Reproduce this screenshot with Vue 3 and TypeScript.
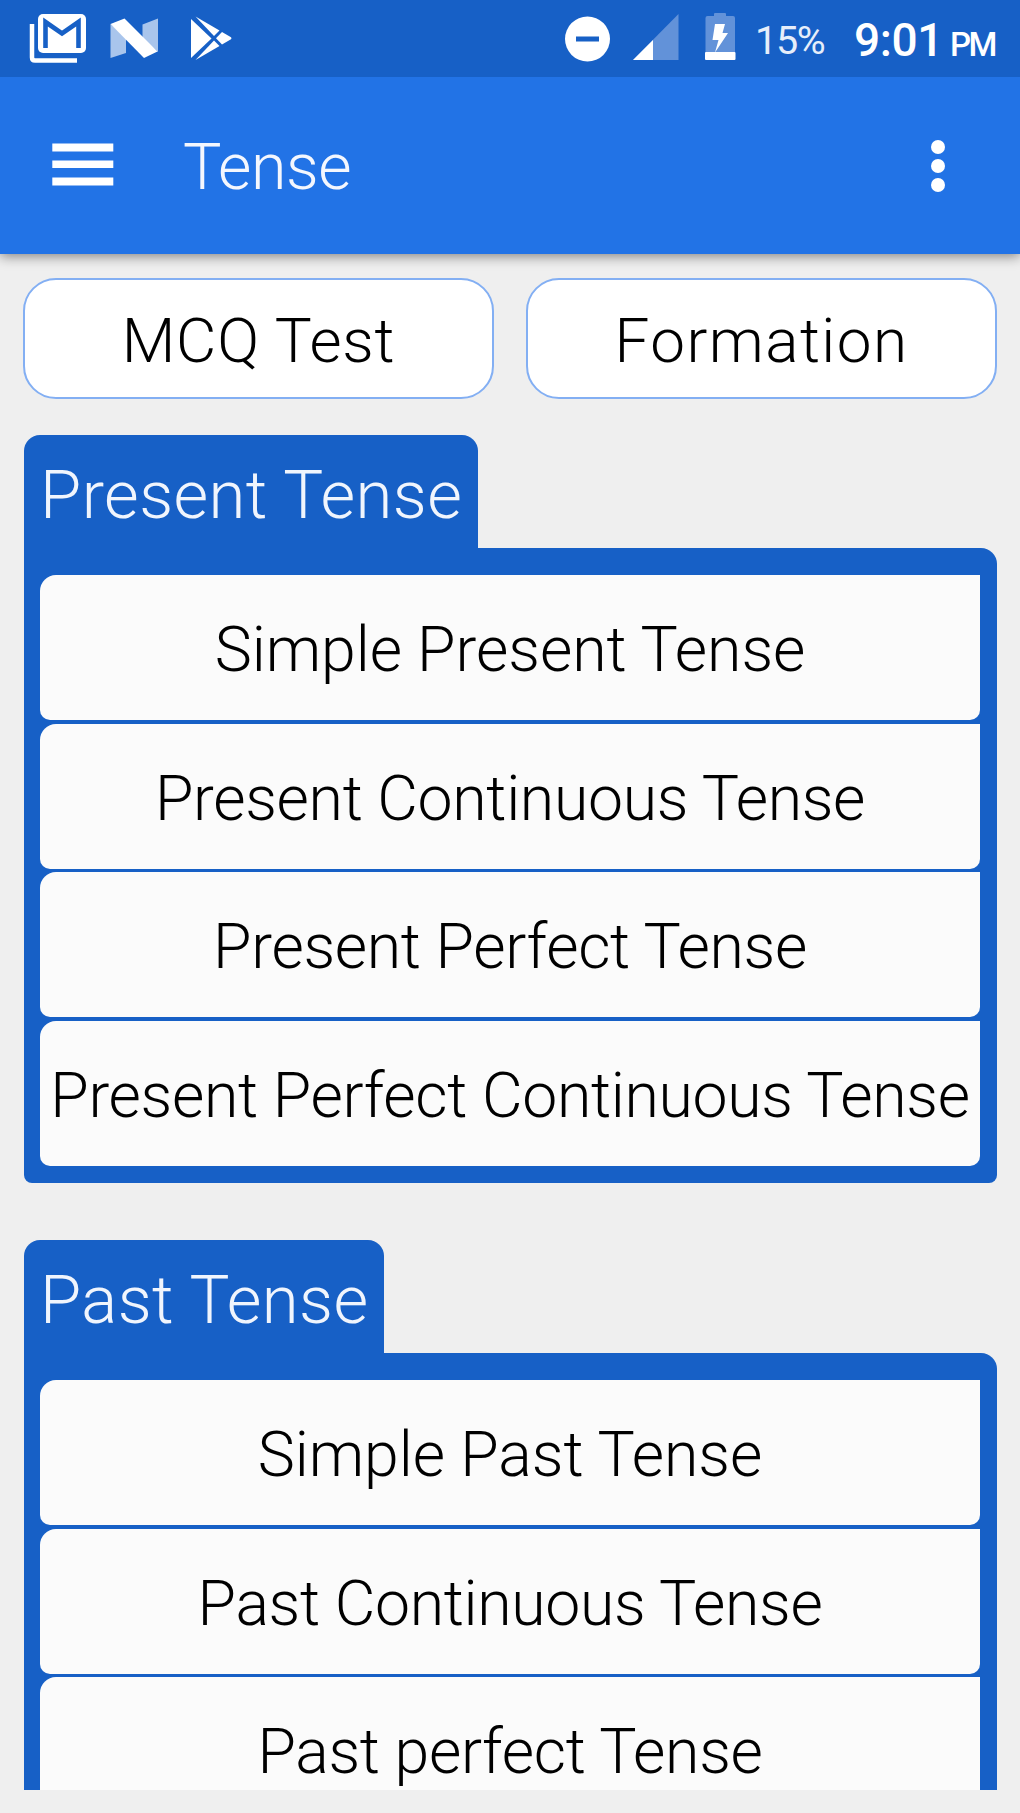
<script setup lang="ts">
interface Section {
  title: string
  items: string[]
}

const actions: string[] = ['MCQ Test', 'Formation']

const sections: Section[] = [
  {
    title: 'Present Tense',
    items: [
      'Simple Present Tense',
      'Present Continuous Tense',
      'Present Perfect Tense',
      'Present Perfect Continuous Tense',
    ],
  },
  {
    title: 'Past Tense',
    items: ['Simple Past Tense', 'Past Continuous Tense', 'Past perfect Tense'],
  },
]

const isSimple = (name: string): boolean => name.startsWith('Simple')
</script>

<template>
  <div class="screen">
    <div class="status">
      <svg class="mail" width="58" height="52" viewBox="29 13 58 52">
        <path d="M32 24V57.500Q32 60.500 35 60.500H77" fill="none" stroke="#fff" stroke-width="4.500" />
        <rect x="38" y="14" width="48" height="39" rx="5" fill="#fff" />
        <path d="M45.500 48V22L62 33.500L78.500 22V48" fill="none" stroke="#1760c6" stroke-width="4.600" />
      </svg>
      <svg class="nougat" width="50" height="44" viewBox="109 17 50 44">
        <path d="M110.500 24L126 37V53L110.500 58Z" fill="#a9c5ec" />
        <path d="M142.500 24.500L158 18.500V52L142.500 38Z" fill="#a9c5ec" />
        <path d="M110.500 24L124.500 18.500L157.500 51.500L144 58Z" fill="#fff" />
      </svg>
      <svg class="play" width="44" height="46" viewBox="190 16 44 46" fill="#fff">
        <path d="M191 19L211.500 38.500L191 58Z" />
        <path d="M195.500 16.500L219.500 30.500L214 36Z" />
        <path d="M195.500 60L219.500 46L214 40.500Z" />
        <path d="M222 32L231 37.200Q232 38.200 231 39.200L222 44.500L216 38.200Z" />
      </svg>
      <div class="spacer"></div>
      <svg class="dnd" width="46" height="46" viewBox="0 0 46 46">
        <circle cx="22.500" cy="23" r="22.500" fill="#fff" />
        <rect x="11" y="20.500" width="23" height="5" fill="#1760c6" />
      </svg>
      <svg class="signal" width="46" height="46" viewBox="0 0 46 46">
        <path d="M0 46L45.500 0V46Z" fill="#6292d9" />
        <path d="M0 46L20 26V46Z" fill="#fff" />
      </svg>
      <svg class="battery" width="32" height="48" viewBox="0 0 32 48">
        <path d="M10 1H20Q21 1 21 2V4H28Q30 4 30 6V41H0.500V6Q0.500 4 2.500 4H9V2Q9 1 10 1Z" fill="#6292d9" />
        <rect x="0" y="40" width="30.500" height="8" rx="1" fill="#fff" />
        <path d="M11 12H21L18.500 21H24L11 40.500L14.500 28H8.500Z" transform="translate(-1 0)" fill="#fff" />
      </svg>
      <span class="percent">15%</span>
      <span class="clock">9:01</span>
      <span class="ampm">PM</span>
    </div>

    <header class="bar">
      <svg class="menu" width="62" height="43" viewBox="0 0 62 43" fill="#fff">
        <rect x="0.300" y="0.500" width="61" height="8" />
        <rect x="0.300" y="17.500" width="61" height="7.500" />
        <rect x="0.300" y="34.500" width="61" height="8" />
      </svg>
      <h1 class="title">Tense</h1>
      <svg class="more" width="15" height="54" viewBox="0 0 15 54" fill="#fff">
        <circle cx="8" cy="8" r="7" />
        <circle cx="8" cy="27" r="7" />
        <circle cx="8" cy="46" r="7" />
      </svg>
    </header>

    <main class="content">
      <div class="actions">
        <button v-for="a in actions" :key="a" class="action">{{ a }}</button>
      </div>
      <section v-for="s in sections" :key="s.title" class="section">
        <h2 class="tab">{{ s.title }}</h2>
        <div class="panel">
          <div v-for="i in s.items" :key="i" class="item" :class="{ simple: isSimple(i) }">{{ i }}</div>
        </div>
      </section>
    </main>
  </div>
</template>

<style>
body {
  margin: 0;
  background: #efefef;
}
</style>

<style scoped>
.screen {
  width: 1020px;
  height: 1813px;
  box-sizing: border-box;
  padding-bottom: 23.500px;
  display: flex;
  flex-direction: column;
  overflow: hidden;
  background: #efefef;
  font-family: Roboto, sans-serif;
  font-weight: 300;
}
.status {
  flex: none;
  position: relative;
  z-index: 2;
  height: 77px;
  box-sizing: border-box;
  padding: 0 24px 0 29px;
  display: flex;
  align-items: flex-start;
  background: #1760c6;
  color: #fff;
}
.status svg {
  flex: none;
}
.mail {
  margin-top: 13px;
}
.nougat {
  margin: 17px 0 0 22px;
}
.play {
  margin: 16px 0 0 31px;
}
.spacer {
  flex: 1;
}
.dnd {
  margin: 16px 22px 0 0;
}
.signal {
  margin: 14px 26px 0 0;
}
.battery {
  margin: 12px 18px 0 0;
}
.percent,
.clock,
.ampm {
  flex: none;
  white-space: nowrap;
}
.percent {
  width: 76px;
  margin-right: 23px;
  font-size: 39.500px;
  line-height: 40px;
  margin-top: 21px;
  font-weight: 400;
  letter-spacing: -1.300px;
  color: #e6eefa;
}
.clock {
  width: 90px;
  margin-right: 6px;
  font-size: 46px;
  line-height: 46px;
  margin-top: 17px;
  font-weight: 500;
  letter-spacing: -0.400px;
}
.ampm {
  width: 46px;
  font-size: 33px;
  line-height: 34px;
  margin-top: 28px;
  font-weight: 500;
  letter-spacing: -2.500px;
}
.bar {
  flex: none;
  height: 177px;
  box-sizing: border-box;
  padding: 0 75.500px 0 52px;
  display: flex;
  align-items: center;
  background: #2273e6;
  position: relative;
  z-index: 1;
  box-shadow: 0 2px 12px rgba(0, 0, 0, 0.48);
}
.menu {
  margin-bottom: 3px;
}
.title {
  flex: 1;
  margin: 3px 0 0 69px;
  font-size: 64.500px;
  line-height: 76px;
  font-weight: 300;
  letter-spacing: -0.400px;
  color: #f4f7fe;
}
.content {
  flex: 1;
  min-height: 0;
  overflow: hidden;
  padding: 24px 23px 0;
}
.actions {
  display: flex;
  gap: 32px;
  margin-bottom: 36px;
}
.action {
  flex: 1;
  height: 121px;
  padding: 5px 0 0;
  box-sizing: border-box;
  border: 2px solid #83aff3;
  border-radius: 33px;
  background: #fff;
  color: #000;
  font-family: inherit;
  font-size: 62px;
  font-weight: 300;
  line-height: 72px;
  letter-spacing: 0.800px;
}
.action + .action {
  letter-spacing: 1.450px;
}
.section {
  margin: 0 0 57.500px 1px;
  display: flex;
  flex-direction: column;
  align-items: flex-start;
}
.tab {
  height: 113px;
  box-sizing: border-box;
  margin: 0;
  padding: 0 15.700px 0 16px;
  border-radius: 16px 16px 0 0;
  background: #1760c6;
  color: #f0f5fd;
  font-size: 67px;
  font-weight: 300;
  line-height: 120px;
  letter-spacing: 0.430px;
  white-space: nowrap;
}
.panel {
  width: 973px;
  box-sizing: border-box;
  padding: 27px 17px 16.500px 16px;
  display: flex;
  flex-direction: column;
  gap: 3.700px;
  border-radius: 0 16px 8px 8px;
  background: #1760c6;
}
.item {
  height: 145px;
  border-radius: 16px 0 10px 10px;
  background: #fbfbfb;
  color: #000;
  font-size: 62.500px;
  line-height: 149px;
  letter-spacing: -0.320px;
  text-align: center;
  white-space: nowrap;
}
.item.simple {
  letter-spacing: -0.040px;
}
</style>
